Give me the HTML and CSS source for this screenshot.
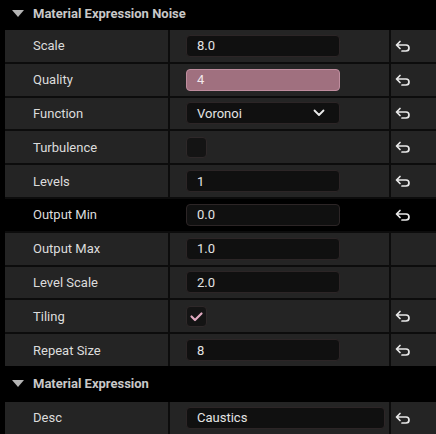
FILE: index.html
```html
<!DOCTYPE html>
<html>
<head>
<meta charset="utf-8">
<link rel="stylesheet" href="styles.css">
</head>
<body>
<svg width="0" height="0" class="defs">
  <defs>
    <symbol id="reset" viewBox="0 0 16 14">
      <path d="M5 2.5 L1.5 6 L5 9.5 M2 6 H11 A3 3 0 0 1 11 12 H7" fill="none" stroke="#e8e8e8" stroke-width="1.7" stroke-linecap="round" stroke-linejoin="round"/>
    </symbol>
  </defs>
</svg>
<div class="panel">
  <div class="cat"><span class="tri"></span><span class="cat-title">Material Expression Noise</span></div>
  <div class="rows">
    <div class="row"><div class="lab">Scale</div><div class="val"><div class="inp">8.0</div></div><div class="rst"><svg class="ico"><use href="#reset"/></svg></div></div>
    <div class="row"><div class="lab">Quality</div><div class="val"><div class="inp active">4</div></div><div class="rst"><svg class="ico"><use href="#reset"/></svg></div></div>
    <div class="row"><div class="lab">Function</div><div class="val"><div class="inp combo"><span>Voronoi</span><svg class="chev" viewBox="0 0 12 8"><path d="M1.5 1.5 L6 6 L10.5 1.5" fill="none" stroke="#eaeaea" stroke-width="1.8" stroke-linecap="round" stroke-linejoin="round"/></svg></div></div><div class="rst"><svg class="ico"><use href="#reset"/></svg></div></div>
    <div class="row"><div class="lab">Turbulence</div><div class="val"><div class="chk"></div></div><div class="rst"><svg class="ico"><use href="#reset"/></svg></div></div>
    <div class="row"><div class="lab">Levels</div><div class="val"><div class="inp">1</div></div><div class="rst"><svg class="ico"><use href="#reset"/></svg></div></div>
    <div class="row hover"><div class="lab">Output Min</div><div class="val"><div class="inp">0.0</div></div><div class="rst"><svg class="ico"><use href="#reset"/></svg></div></div>
    <div class="row"><div class="lab">Output Max</div><div class="val"><div class="inp">1.0</div></div><div class="rst"></div></div>
    <div class="row"><div class="lab">Level Scale</div><div class="val"><div class="inp">2.0</div></div><div class="rst"></div></div>
    <div class="row"><div class="lab">Tiling</div><div class="val"><div class="chk"><svg class="tick" viewBox="0 0 21 21"><path d="M5.5 10.5 L9 14 L15.5 7.5" fill="none" stroke="#e0a9c0" stroke-width="2.2" stroke-linecap="round" stroke-linejoin="round"/></svg></div></div><div class="rst"><svg class="ico"><use href="#reset"/></svg></div></div>
    <div class="row"><div class="lab">Repeat Size</div><div class="val"><div class="inp">8</div></div><div class="rst"><svg class="ico"><use href="#reset"/></svg></div></div>
  </div>
  <div class="cat cat2"><span class="tri"></span><span class="cat-title">Material Expression</span></div>
  <div class="rows">
    <div class="row last"><div class="lab">Desc</div><div class="val"><div class="inp wide">Caustics</div></div><div class="rst"><svg class="ico"><use href="#reset"/></svg></div></div>
  </div>
</div>
</body>
</html>
```

FILE: styles.css
```css
* { box-sizing: border-box; }
html, body { margin: 0; padding: 0; background: #000; }
body {
  width: 436px;
  height: 434px;
  overflow: hidden;
  font-family: Roboto, "Liberation Sans", sans-serif;
  font-size: 13px;
  color: #dcdcdc;
}
.defs { position: absolute; }
.panel { display: flex; flex-direction: column; }
.cat {
  height: 30px;
  display: flex;
  align-items: center;
  padding-left: 12px;
  padding-bottom: 3px;
}
.cat2 { height: 36px; padding-bottom: 0; }
.tri {
  width: 0; height: 0;
  border-left: 6px solid transparent;
  border-right: 6px solid transparent;
  border-top: 7px solid #b4b4b4;
  margin-right: 9px;
}
.cat-title { font-weight: 700; color: #c8c8c8; font-size: 13px; }
.rows {
  display: flex;
  flex-direction: column;
  gap: 2px;
  margin-left: 5px;
  background: #0c0c0c;
}
.row {
  height: 31.8px;
  display: flex;
  gap: 2px;
}
.row.last { height: 32px; }
.lab, .val, .rst { background: #242424; display: flex; align-items: center; }
.lab { width: 163px; padding-left: 28px; }
.val { width: 219px; padding-left: 16px; }
.rst { flex: 1; justify-content: flex-start; padding-left: 4px; }
.row.hover { background: #000; }
.row.hover .lab, .row.hover .val, .row.hover .rst { background: #000; }
.ico { width: 16px; height: 14px; }
.inp {
  width: 154px;
  height: 22px;
  background: #101010;
  border: 1px solid #2c2526;
  border-radius: 4px;
  padding-left: 10px;
  display: flex;
  align-items: center;
  color: #e4e4e4;
}
.inp.active { background: #a0707f; border-color: #bf8d9e; color: #f2e8ec; }
.inp.combo { justify-content: space-between; padding-right: 14px; }
.inp.wide { width: 199px; }
.chev { width: 12px; height: 8px; }
.chk {
  width: 21px;
  height: 21px;
  background: #141414;
  border: 1px solid #2e2829;
  border-radius: 4px;
  display: flex;
  align-items: center;
  justify-content: center;
}
.tick { width: 21px; height: 21px; flex: none; }
```
